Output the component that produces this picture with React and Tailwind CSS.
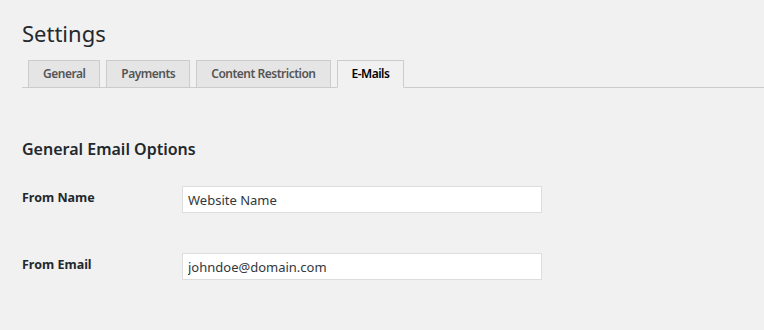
export default function App() {
  const tabs = ['General', 'Payments', 'Content Restriction', 'E-Mails'];
  const active = 'E-Mails';

  return (
    <div className="min-h-screen bg-[#f1f1f1] pt-[19px] pl-[22px] text-[#23282d] font-['Noto_Sans',sans-serif]">
      <h1 className="text-[22px] leading-[29px] font-normal">Settings</h1>

      <nav className="mt-[12px] flex gap-[6px] pl-[6px] border-b border-[#ccc]">
        {tabs.map((tab) => (
          <div
            key={tab}
            className={
              tab === active
                ? '-mb-px h-[28px] px-[14px] flex items-center border border-[#ccc] border-b-[#f1f1f1] bg-[#f1f1f1] text-[12px] tracking-[-0.5px] font-semibold text-black'
                : '-mb-px h-[28px] px-[14px] flex items-center border border-[#ccc] bg-[#e5e5e5] text-[12px] tracking-[-0.5px] font-semibold text-[#555]'
            }
          >
            {tab}
          </div>
        ))}
      </nav>

      <h2 className="mt-[50px] text-[16px] leading-[22px] font-semibold">General Email Options</h2>

      <div className="mt-[26px] flex flex-col gap-[40px]">
        <div className="flex items-start">
          <label className="w-[160px] pt-[3px] text-[12.5px] leading-[18px] font-bold">From Name</label>
          <input
            type="text"
            defaultValue="Website Name"
            className="w-[360px] h-[27px] px-[5px] bg-white border border-[#ddd] text-[13px] text-[#32373c] outline-none"
          />
        </div>
        <div className="flex items-start">
          <label className="w-[160px] pt-[3px] text-[12.5px] leading-[18px] font-bold">From Email</label>
          <input
            type="text"
            defaultValue="johndoe@domain.com"
            className="w-[360px] h-[27px] px-[5px] bg-white border border-[#ddd] text-[13px] text-[#32373c] outline-none"
          />
        </div>
      </div>
    </div>
  );
}
